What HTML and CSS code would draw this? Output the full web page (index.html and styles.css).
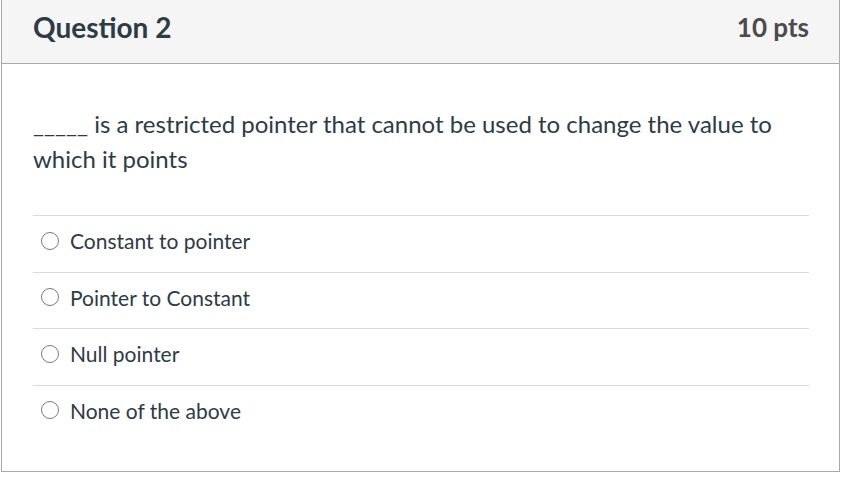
FILE: index.html
```html
<!DOCTYPE html>
<html>
<head>
<meta charset="utf-8">
<link rel="stylesheet" href="styles.css">
</head>
<body>
<div class="question">
  <div class="q-header">
    <h2 class="q-title">Question 2</h2>
    <span class="q-points">10 pts</span>
  </div>
  <div class="q-body">
    <p class="q-text">_____ is a restricted pointer that cannot be used to change the value to which it points</p>
    <div class="answers">
      <label class="answer"><span class="radio"></span><span class="answer-text">Constant to pointer</span></label>
      <label class="answer"><span class="radio"></span><span class="answer-text">Pointer to Constant</span></label>
      <label class="answer"><span class="radio"></span><span class="answer-text">Null pointer</span></label>
      <label class="answer"><span class="radio"></span><span class="answer-text">None of the above</span></label>
    </div>
  </div>
</div>
</body>
</html>
```

FILE: styles.css
```css
html, body {
  margin: 0;
  padding: 0;
  background: #ffffff;
}

body {
  font-family: Lato, "Liberation Sans", sans-serif;
  color: #2d3b45;
}

.question {
  margin: -1px 0 0 1px;
  width: 839px;
  height: 473px;
  border: 1px solid #a9a9a9;
  box-sizing: border-box;
  display: flex;
  flex-direction: column;
}

.q-header {
  height: 64px;
  box-sizing: border-box;
  background: #f5f5f5;
  border-bottom: 1px solid #a9a9a9;
  display: flex;
  align-items: center;
  justify-content: space-between;
  padding: 0 30px 9px 31px;
}

.q-title {
  margin: 0;
  font-size: 28px;
  font-weight: 700;
  color: #2d3b45;
}

.q-points {
  font-size: 26px;
  font-weight: 700;
  color: #4b4b4b;
}

.q-body {
  padding: 42px 30px 0 31px;
}

.q-text {
  margin: 0 0 39px;
  font-size: 24px;
  line-height: 35px;
  color: #2d3b45;
}

.answers {
  display: flex;
  flex-direction: column;
}

.answer {
  display: flex;
  align-items: center;
  height: 56.5px;
  box-sizing: border-box;
  border-top: 1px solid #dadada;
  padding-left: 8px;
  padding-bottom: 6px;
}

.radio {
  width: 18px;
  height: 18px;
  border: 1.5px solid #7a7a7a;
  border-radius: 50%;
  box-sizing: border-box;
  margin-right: 11px;
  flex: none;
}

.answer-text {
  font-size: 21px;
  color: #2d3b45;
}
```
